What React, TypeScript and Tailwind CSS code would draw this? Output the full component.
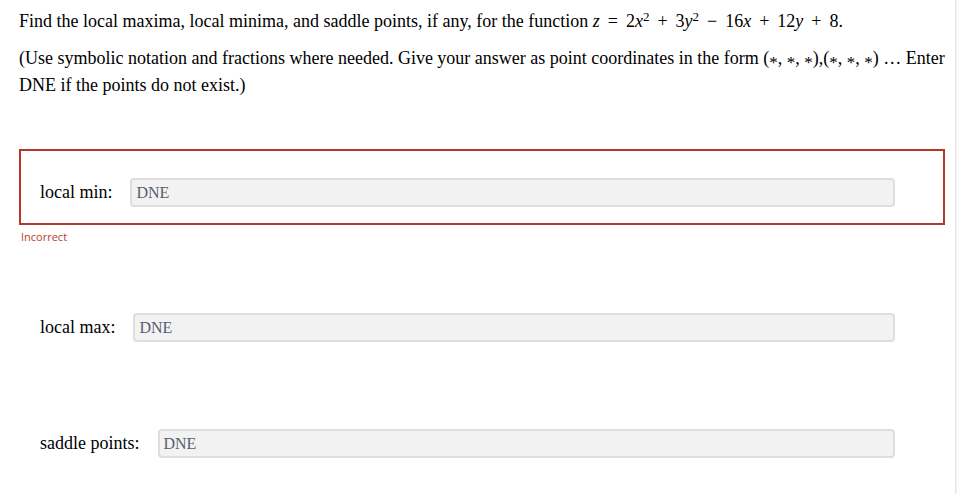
export default function App() {
  const Op = ({ c }: { c: string }) => <span className="mx-[8px]">{c}</span>
  const I = ({ c }: { c: string }) => <span className="italic">{c}</span>
  const Star = () => <span className="inline-block leading-[10px] translate-y-[4px] text-[17px]">*</span>

  const Field = ({ label, wrong }: { label: string; wrong?: boolean }) => (
    <div>
      <div
        className={
          'flex items-center pl-[19px] pr-[48px] pt-[27px] pb-[16px] border-2 ' +
          (wrong ? 'border-[#b8372b]' : 'border-transparent')
        }
      >
        <span className="whitespace-nowrap">{label}</span>
        <div className="ml-[18px] flex-1 h-[29px] rounded-[4px] border-2 border-[#dedede] bg-[#f2f2f2] pl-[4px] flex items-center text-[16px] text-[#55606d]">
          DNE
        </div>
      </div>
      {wrong && (
        <div className="h-[19px] pl-[2px] pt-[5px] text-[11px] leading-[13px] text-[#c0392b] font-['Open_Sans',sans-serif]">
          Incorrect
        </div>
      )}
    </div>
  )

  return (
    <div className="flex min-h-[494px] bg-white text-black font-['Liberation_Serif',serif] text-[18px] leading-[27px]">
      <main className="flex-1 pl-[19px] pr-[10px] pt-[8px]">
        <p>
          Find the local maxima, local minima, and saddle points, if any, for the function <I c="z" />
          <Op c="=" />
          2<I c="x" />
          <sup className="text-[13px]">2</sup>
          <Op c="+" />
          3<I c="y" />
          <sup className="text-[13px]">2</sup>
          <Op c="−" />
          16<I c="x" />
          <Op c="+" />
          12<I c="y" />
          <Op c="+" />
          8.
        </p>
        <p className="mt-[10px]">
          (Use symbolic notation and fractions where needed. Give your answer as point coordinates in the form (<Star />,{' '}
          <Star />, <Star />),(<Star />, <Star />, <Star />) … Enter DNE if the points do not exist.)
        </p>
        <div className="mt-[50px] space-y-[40px]">
          <Field label="local min:" wrong />
          <Field label="local max:" />
          <Field label="saddle points:" />
        </div>
      </main>
      <div className="w-[2px] border-l border-[#e6e6e6] bg-[#f4f4f4]" />
    </div>
  )
}
